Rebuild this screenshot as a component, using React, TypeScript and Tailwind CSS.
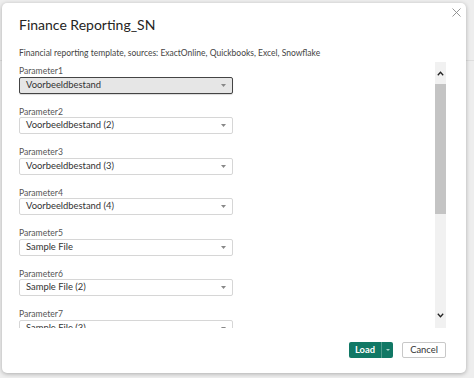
import React from "react";

const params = [
  { label: "Parameter1", value: "Voorbeeldbestand", focused: true },
  { label: "Parameter2", value: "Voorbeeldbestand (2)" },
  { label: "Parameter3", value: "Voorbeeldbestand (3)" },
  { label: "Parameter4", value: "Voorbeeldbestand (4)" },
  { label: "Parameter5", value: "Sample File" },
  { label: "Parameter6", value: "Sample File (2)" },
  { label: "Parameter7", value: "Sample File (3)" },
];

function Caret({ color = "#777" }: { color?: string }) {
  return (
    <svg width="5" height="3" viewBox="0 0 5 3" className="shrink-0">
      <path d="M0 0 L5 0 L2.5 3 Z" fill={color} />
    </svg>
  );
}

export default function App() {
  return (
    <div className="w-[474px] h-[378px] bg-[#eeeeee] relative overflow-hidden font-['Lato',sans-serif]">
      <div className="absolute left-0 right-0 top-[60px] h-px bg-[#dedede]" />
      <div className="absolute left-[2px] top-[3px] w-[464px] h-[370px] bg-white rounded-[5px] shadow-[0_1px_4px_rgba(0,0,0,0.28)] flex flex-col">
        <button className="absolute left-[449px] top-[4px] w-[10px] h-[10px] flex items-center justify-center">
          <svg width="9" height="9" viewBox="0 0 9 9">
            <path d="M0.5 0.5 L8.5 8.5 M8.5 0.5 L0.5 8.5" stroke="#8a8a8a" strokeWidth="0.9" />
          </svg>
        </button>
        <div className="pl-[17px] pt-[12px] text-[14px] leading-[19px] text-[#252423]">
          Finance Reporting_SN
        </div>
        <div className="pl-[17px] mt-[13px] text-[8.5px] leading-[12px] text-[#444]">
          Financial reporting template, sources: ExactOnline, Quickbooks, Excel, Snowflake
        </div>
        <div className="mt-[3px] h-[266px] flex pl-[17px] pr-[20px]">
          <div className="flex-1 overflow-hidden flex flex-col gap-[11px] pt-[2px]">
            {params.map((p) => (
              <div key={p.label} className="flex flex-col shrink-0">
                <div className="h-[12px] pt-[1px] text-[8.6px] leading-[12px] text-[#555]">{p.label}</div>
                <div
                  className={
                    "mt-[0.5px] w-[214px] h-[17px] rounded-[2px] flex items-center justify-between pl-[6px] pr-[6px] text-[9.4px] text-[#333] " +
                    (p.focused
                      ? "bg-[#e6e6e6] border border-[#444] shadow-[0_1px_1px_rgba(0,0,0,0.15)]"
                      : "bg-white border border-[#d6d6d6]")
                  }
                >
                  <span>{p.value}</span>
                  <Caret color="#888" />
                </div>
              </div>
            ))}
          </div>
          <div className="w-[11px] h-full bg-[#f1f1f1] flex flex-col items-center">
            <div className="h-[22px] flex items-center justify-center">
              <svg width="7" height="5" viewBox="0 0 7 5">
                <path d="M0.8 4.2 L3.5 1.3 L6.2 4.2" stroke="#222" strokeWidth="1.3" fill="none" />
              </svg>
            </div>
            <div className="w-full h-[130px] bg-[#c4c4c4]" />
            <div className="flex-1" />
            <div className="h-[26px] flex items-center justify-center">
              <svg width="7" height="5" viewBox="0 0 7 5">
                <path d="M0.8 0.8 L3.5 3.7 L6.2 0.8" stroke="#222" strokeWidth="1.3" fill="none" />
              </svg>
            </div>
          </div>
        </div>
        <div className="mt-[14px] flex justify-end pr-[20px] gap-[9px]">
          <div className="flex h-[16px] rounded-[2px] overflow-hidden bg-[#117865]">
            <div className="w-[32px] flex items-center justify-center text-[9.4px] font-bold text-white">Load</div>
            <div className="w-px bg-[#4f9c8c]" />
            <div className="w-[11px] flex items-center justify-center">
              <svg width="4" height="2" viewBox="0 0 4 2">
                <path d="M0 0 L4 0 L2 2 Z" fill="#a7d2c8" />
              </svg>
            </div>
          </div>
          <div className="w-[44px] h-[16px] rounded-[2px] border border-[#c8c8c8] bg-white flex items-center justify-center text-[9.4px] text-[#333]">
            Cancel
          </div>
        </div>
      </div>
    </div>
  );
}
